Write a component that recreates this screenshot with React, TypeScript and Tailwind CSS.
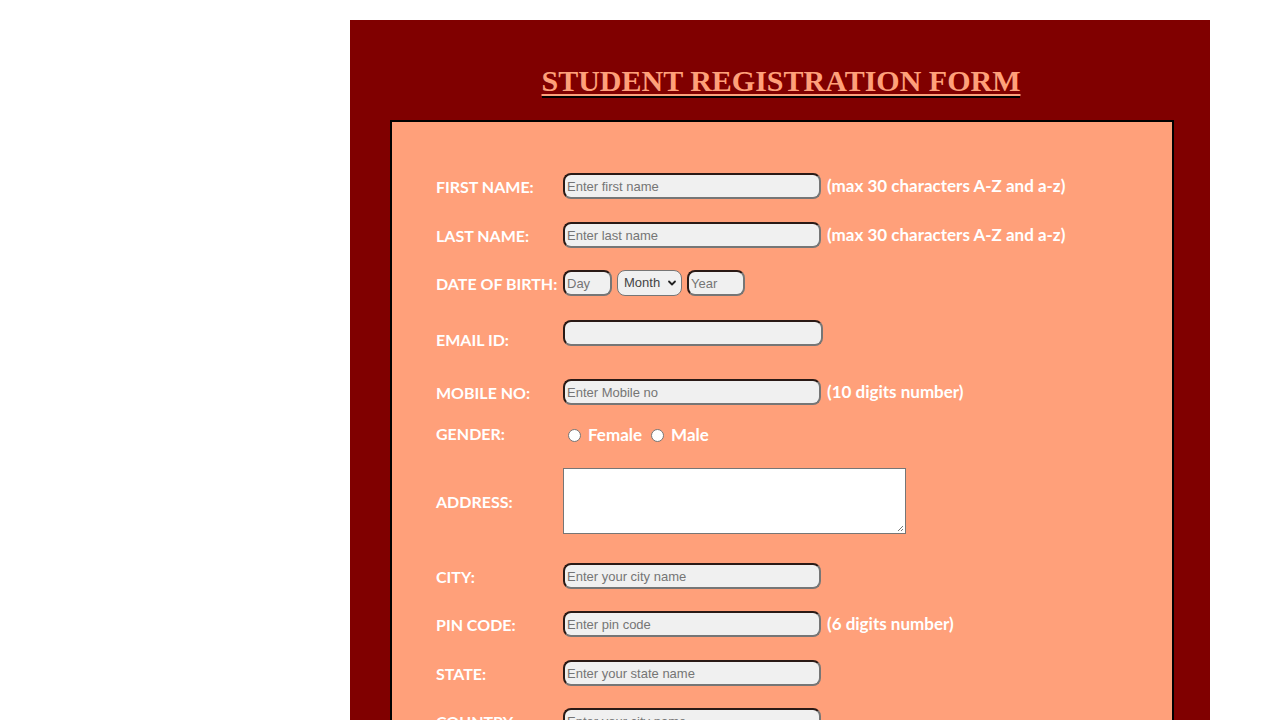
import React from 'react';

const label = 'w-[127px] shrink-0 pt-[2px] text-[16px] font-bold text-white';
const field =
  'h-[26px] rounded-[8px] border-2 border-t-[#2a1a16] border-l-[#2a1a16] border-b-[#767676] border-r-[#767676] bg-[#f0f0f0] px-[2px] text-[13px] text-black placeholder:text-[#757575] outline-none';
const hint = 'ml-[6px] text-[17px] font-bold text-white';
const arial = { fontFamily: '"Liberation Sans", Arial, sans-serif' };

function Row({ name, children, className = '', labelClass = '' }: { name: string; children: React.ReactNode; className?: string; labelClass?: string }) {
  return (
    <div className={'flex items-center ' + className}>
      <span className={label + ' ' + labelClass}>{name}</span>
      {children}
    </div>
  );
}

export default function App() {
  return (
    <div className="min-h-screen bg-white pt-[20px]" style={{ fontFamily: 'Lato, "Open Sans", sans-serif' }}>
      <div className="ml-[350px] w-[860px] bg-[#800000] pb-[40px] pl-[40px] pr-[36px] pt-[40px]">
        <h1 className="flex h-[40px] items-center justify-center" style={{ fontFamily: '"Liberation Serif", "Times New Roman", serif' }}>
          <span className="-ml-[2px] border-b-[3px] border-black pt-[4px] text-[30px] font-bold leading-[28px] text-[#ffa07a] underline decoration-2 underline-offset-[3px]">
            STUDENT REGISTRATION FORM
          </span>
        </h1>
        <form className="mt-[20px] border-2 border-black bg-[#ffa07a] pb-[60px] pl-[44px] pt-[51px]">
          <Row name="FIRST NAME:">
            <input className={field + ' w-[258px]'} placeholder="Enter first name" style={arial} />
            <span className={hint}>(max 30 characters A-Z and a-z)</span>
          </Row>
          <Row name="LAST NAME:" className="mt-[23px]">
            <input className={field + ' w-[258px]'} placeholder="Enter last name" style={arial} />
            <span className={hint}>(max 30 characters A-Z and a-z)</span>
          </Row>
          <Row name="DATE OF BIRTH:" className="mt-[22px]">
            <input className={field + ' w-[49px]'} placeholder="Day" style={arial} />
            <div
              className="ml-[5px] flex h-[26px] w-[65px] items-center justify-between rounded-[8px] border border-[#767676] bg-[#f0f0f0] pl-[6px] pr-[4px] text-[13px] text-[#444]"
              style={arial}
            >
              <span>Month</span>
              <svg width="10" height="10" viewBox="0 0 10 10">
                <path d="M2 3.5 L5 6.5 L8 3.5" fill="none" stroke="#222" strokeWidth="1.8" strokeLinecap="round" strokeLinejoin="round" />
              </svg>
            </div>
            <input className={field + ' ml-[5px] w-[58px]'} placeholder="Year" style={arial} />
          </Row>
          <Row name="EMAIL ID:" className="mt-[24px]" labelClass="relative top-[6px]">
            <input className={field + ' w-[260px]'} style={arial} />
          </Row>
          <Row name="MOBILE NO:" className="mt-[33px]">
            <input className={field + ' w-[258px]'} placeholder="Enter Mobile no" style={arial} />
            <span className={hint}>(10 digits number)</span>
          </Row>
          <div className="mt-[16px] flex h-[26px] items-center">
            <span className={label + ' -mt-[2px]'}>GENDER:</span>
            <label className="flex items-center pt-[2px] text-[17px] font-bold text-white">
              <span className="ml-[5px] mr-[7px] h-[13px] w-[13px] rounded-full border border-[#767676] bg-white" />
              Female
            </label>
            <label className="ml-[4px] flex items-center pt-[2px] text-[17px] font-bold text-white">
              <span className="ml-[5px] mr-[7px] h-[13px] w-[13px] rounded-full border border-[#767676] bg-white" />
              Male
            </label>
          </div>
          <Row name="ADDRESS:" className="mt-[21px]">
            <div className="relative h-[66px] w-[343px] border border-[#767676] bg-white">
              <svg className="absolute bottom-[1px] right-[1px]" width="8" height="8" viewBox="0 0 8 8">
                <path d="M7 2 L2 7 M7 5 L5 7" stroke="#777" strokeWidth="1" />
              </svg>
            </div>
          </Row>
          <Row name="CITY:" className="mt-[29px]">
            <input className={field + ' w-[258px]'} placeholder="Enter your city name" style={arial} />
          </Row>
          <Row name="PIN CODE:" className="mt-[22px]">
            <input className={field + ' w-[258px]'} placeholder="Enter pin code" style={arial} />
            <span className={hint}>(6 digits number)</span>
          </Row>
          <Row name="STATE:" className="mt-[23px]">
            <input className={field + ' w-[258px]'} placeholder="Enter your state name" style={arial} />
          </Row>
          <Row name="COUNTRY:" className="mt-[22px]">
            <input className={field + ' w-[258px]'} placeholder="Enter your city name" style={arial} />
          </Row>
        </form>
      </div>
    </div>
  );
}
